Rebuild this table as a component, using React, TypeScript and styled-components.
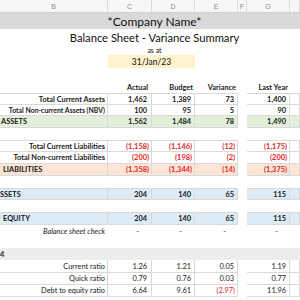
import React from 'react';
import styled, { createGlobalStyle, css } from 'styled-components';

const GlobalStyle = createGlobalStyle`
  html, body { margin: 0; padding: 0; background: #ffffff; }
  body { font-family: Lato, "Liberation Sans", sans-serif; color: #1a1a1a; }
  * { box-sizing: border-box; }
`;

const COLS = '108px 44px 43px 43px 9px 43px 1fr';
const LINE = '#d9d9d9';

const Sheet = styled.div`
  width: 300px;
  height: 300px;
  overflow: hidden;
  display: flex;
  flex-direction: column;
`;

const Row = styled.div<{ $h: number; $bg?: string }>`
  display: grid;
  grid-template-columns: ${COLS};
  height: ${(p) => p.$h}px;
  flex: none;
  background: ${(p) => p.$bg || 'transparent'};
`;

const HeadRow = styled(Row)`
  background: #f7f7f7;
  border-bottom: 1px solid #d0d0d0;
`;

const HeadCell = styled.div`
  display: flex;
  align-items: center;
  justify-content: center;
  font-family: "Liberation Sans", sans-serif;
  font-size: 7px;
  color: #8a8a8a;
  border-right: 1px solid #dcdcdc;
`;

const BandText = styled.div<{ $size: number }>`
  grid-column: 1 / -1;
  display: flex;
  align-items: center;
  justify-content: center;
  padding-left: 9px;
  font-size: ${(p) => p.$size}px;
  color: #111;
  white-space: nowrap;
`;

const DateCell = styled.div`
  grid-column: 2 / 4;
  display: flex;
  align-items: center;
  justify-content: center;
  background: #fff2cc;
  font-size: 8.5px;
  color: #111;
`;

type Align = 'left' | 'right' | 'center';

const Cell = styled.div<{
  $align?: Align;
  $bold?: boolean;
  $red?: boolean;
  $italic?: boolean;
  $bg?: string;
  $grid?: boolean;
  $top?: boolean;
  $pr?: number;
  $pl?: number;
  $tight?: boolean;
}>`
  display: flex;
  align-items: center;
  justify-content: ${(p) =>
    p.$align === 'left' ? 'flex-start' : p.$align === 'center' ? 'center' : 'flex-end'};
  padding: 0 ${(p) => p.$pr ?? 3}px 0 ${(p) => p.$pl ?? 0}px;
  font-size: ${(p) => (p.$tight ? 6.9 : 7.4)}px;
  font-weight: ${(p) => (p.$bold ? 700 : 400)};
  font-style: ${(p) => (p.$italic ? 'italic' : 'normal')};
  color: ${(p) => (p.$red ? '#e3261f' : '#1a1a1a')};
  background: ${(p) => p.$bg || 'transparent'};
  white-space: nowrap;
  overflow: hidden;
  ${(p) =>
    p.$grid &&
    css`
      border-right: 1px solid ${LINE};
      border-bottom: 1px solid ${LINE};
    `}
  ${(p) =>
    p.$top &&
    css`
      border-top: 1px solid ${LINE};
    `}
`;

const Gap = styled.div``;

type Val = { v: string; red?: boolean };

type DataRowProps = {
  label: string;
  labelAlign?: Align;
  labelPad?: number;
  tight?: boolean;
  vals: Val[];
  bold?: boolean;
  bg?: string;
  top?: boolean;
  h?: number;
};

const pads = [4, 3, 3, 3];
const negPads = [2, 2, 2, 2];

function DataRow({ label, labelAlign = 'right', labelPad = 0, tight, vals, bold = true, bg, top, h = 12 }: DataRowProps) {
  const [c, d, e, g] = vals;
  const cellFor = (x: Val, i: number) => (
    <Cell
      $bold={bold}
      $red={x.red}
      $bg={bg}
      $grid
      $top={top}
      $pr={x.v.startsWith('(') ? negPads[i] : pads[i]}
    >
      {x.v}
    </Cell>
  );
  return (
    <Row $h={h}>
      <Cell $align={labelAlign} $bold={bold} $bg={bg} $grid $top={top} $pr={2} $pl={labelPad} $tight={tight}>
        {label}
      </Cell>
      {cellFor(c, 0)}
      {cellFor(d, 1)}
      {cellFor(e, 2)}
      <Gap />
      {cellFor(g, 3)}
      <Cell $bg={bg} $grid $top={top} />
    </Row>
  );
}

const Blank = ({ h = 12 }: { h?: number }) => <Row $h={h} />;

const n = (v: string): Val => ({ v, red: v.startsWith('(') });

const GREEN = '#e2efda';
const PINK = '#fce4d6';
const BLUE = '#ddebf7';

export default function App() {
  return (
    <>
      <GlobalStyle />
      <Sheet>
        <HeadRow $h={13}>
          <HeadCell>B</HeadCell>
          <HeadCell>C</HeadCell>
          <HeadCell>D</HeadCell>
          <HeadCell>E</HeadCell>
          <HeadCell>F</HeadCell>
          <HeadCell>G</HeadCell>
          <HeadCell />
        </HeadRow>

        <Row $h={16} $bg="#d9d9d9">
          <BandText $size={12}>*Company Name*</BandText>
        </Row>
        <Row $h={16}>
          <BandText $size={11.2}>Balance Sheet - Variance Summary</BandText>
        </Row>
        <Row $h={10}>
          <BandText $size={7}>as at</BandText>
        </Row>
        <Row $h={13}>
          <DateCell>31/Jan/23</DateCell>
        </Row>
        <Blank h={13} />

        <Row $h={12}>
          <Cell />
          <Cell $bold $pr={4}>Actual</Cell>
          <Cell $bold $pr={2}>Budget</Cell>
          <Cell $bold $pr={2}>Variance</Cell>
          <Gap />
          <Cell $bold $pr={2}>Last Year</Cell>
          <Cell />
        </Row>

        <DataRow top label="Total Current Assets" vals={[n('1,462'), n('1,389'), n('73'), n('1,400')]} />
        <DataRow h={11} tight label="Total Non-current Assets (NBV)" vals={[n('100'), n('95'), n('5'), n('90')]} />
        <DataRow bg={GREEN} labelAlign="left" labelPad={1} label="ASSETS" vals={[n('1,562'), n('1,484'), n('78'), n('1,490')]} />
        <Blank />

        <DataRow top label="Total Current Liabilities" vals={[n('(1,158)'), n('(1,146)'), n('(12)'), n('(1,175)')]} />
        <DataRow label="Total Non-current Liabilities" vals={[n('(200)'), n('(198)'), n('(2)'), n('(200)')]} />
        <DataRow bg={PINK} labelAlign="left" labelPad={3} label="LIABILITIES" vals={[n('(1,358)'), n('(1,344)'), n('(14)'), n('(1,375)')]} />
        <Blank />

        <DataRow top bg={BLUE} labelAlign="left" labelPad={0} label="SSETS" vals={[n('204'), n('140'), n('65'), n('115')]} />
        <Blank />
        <DataRow top h={13} bg={BLUE} labelAlign="left" labelPad={3} label="EQUITY" vals={[n('204'), n('140'), n('65'), n('115')]} />

        <Row $h={12}>
          <Cell $italic $pr={3}>Balance sheet check</Cell>
          <Cell $pr={13}>-</Cell>
          <Cell $pr={13}>-</Cell>
          <Cell $pr={12}>-</Cell>
          <Gap />
          <Cell $pr={12}>-</Cell>
          <Cell />
        </Row>
        <Blank h={11} />

        <Row $h={12} $bg="#ededed">
          <Cell $align="left" $bold $pl={0}>
            4
          </Cell>
        </Row>

        <DataRow bold={false} h={13} label="Current ratio" vals={[n('1.26'), n('1.21'), n('0.05'), n('1.19')]} />
        <DataRow bold={false} label="Quick ratio" vals={[n('0.79'), n('0.76'), n('0.03'), n('0.77')]} />
        <DataRow bold={false} label="Debt to equity ratio" vals={[n('6.64'), n('9.61'), n('(2.97)'), n('11.96')]} />
      </Sheet>
    </>
  );
}
